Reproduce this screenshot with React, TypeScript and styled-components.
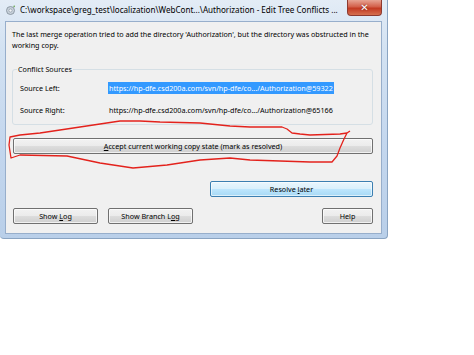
import styled, { createGlobalStyle } from "styled-components";

const GlobalStyle = createGlobalStyle`
  html, body {
    margin: 0;
    padding: 0;
    background: #ffffff;
  }
  body {
    font-family: "Noto Sans", "DejaVu Sans", sans-serif;
    font-size: 7px;
    color: #000;
  }
`;

const Window = styled.div`
  position: relative;

  width: 388px;
  height: 239px;

  display: flex;
  flex-direction: column;

  box-sizing: border-box;
  border: 1px solid #8aa4c2;
  border-top: none;
  border-left: none;
  border-radius: 0 0 4px 4px;

  background: linear-gradient(
    to bottom,
    #e3ecf6 0%,
    #d3e2f2 20%,
    #c4d7ee 60%,
    #b9cfe9 100%
  );
`;

const TitleBar = styled.div`
  height: 21px;

  display: flex;
  align-items: flex-start;
  flex-shrink: 0;
`;

const AppIcon = styled.svg`
  width: 11px;
  height: 11px;

  margin: 5px 4px 0 5px;
`;

const Title = styled.div`
  margin-top: 4px;

  font-size: 8.1px;
  white-space: nowrap;
`;

const CloseButton = styled.div`
  width: 35px;
  height: 16px;

  margin-left: auto;
  margin-right: 5px;

  display: flex;
  align-items: center;
  justify-content: center;

  box-sizing: border-box;
  border: 1px solid #8d3a2f;
  border-top: none;
  border-radius: 0 0 4px 4px;

  background: linear-gradient(to bottom, #e7a493 0%, #d3604a 45%, #c33a22 55%, #d5704f 100%);

  color: #fff;
  font-family: "DejaVu Sans", sans-serif;
  font-size: 10px;
  font-weight: bold;
  text-shadow: 0 0 2px #6b1a10;
`;

const Client = styled.div`
  flex: 1;

  margin: 0 5px 4px 5px;
  padding: 7px 8px 0 6px;

  display: flex;
  flex-direction: column;

  box-sizing: border-box;
  border: 1px solid #97aecb;

  background: #f0f0f0;
`;

const Message = styled.p`
  margin: 0;

  line-height: 11px;
  font-size: 7.2px;
`;

const GroupBox = styled.fieldset`
  margin: 13px 0 0 0;
  padding: 2px 0 3px 7px;

  border: 1px solid #d5dfe5;
  border-radius: 3px;
`;

const GroupLabel = styled.legend`
  margin-left: -3px;
  padding: 0 1px;

  font-size: 7.2px;
  line-height: 11px;
`;

const SourceGrid = styled.div`
  display: grid;
  grid-template-columns: 89px 1fr;
  grid-auto-rows: 22px;
  align-items: center;

  font-size: 7.2px;
`;

const SourceLabel = styled.span``;

const Url = styled.span<{ $selected?: boolean }>`
  justify-self: start;

  margin-left: -1px;
  padding: 1px 1px;

  line-height: 10px;

  background: ${({ $selected }) => ($selected ? "#3399ff" : "transparent")};
  color: ${({ $selected }) => ($selected ? "#ffffff" : "#000000")};
`;

const Button = styled.div<{ $default?: boolean; $width?: number }>`
  height: 16px;
  width: ${({ $width }) => ($width ? `${$width}px` : "auto")};

  display: flex;
  align-items: center;
  justify-content: center;

  box-sizing: border-box;
  border: 1px solid ${({ $default }) => ($default ? "#3c7fb1" : "#707070")};
  border-radius: 2px;

  background: ${({ $default }) =>
    $default
      ? "linear-gradient(to bottom, #eaf6fd 0%, #d9f0fc 50%, #bee6fd 51%, #a7d9f5 100%)"
      : "linear-gradient(to bottom, #f2f2f2 0%, #ebebeb 50%, #dddddd 51%, #cfcfcf 100%)"};
  box-shadow: inset 0 0 0 1px
    ${({ $default }) => ($default ? "rgba(255,255,255,0.6)" : "rgba(255,255,255,0.7)")};

  font-size: 7.2px;
  white-space: nowrap;

  u {
    text-decoration: underline;
    text-underline-offset: 1px;
  }
`;

const AcceptRow = styled.div`
  margin: 13px 0 0 1px;

  display: flex;
  flex-direction: column;
`;

const ResolveRow = styled.div`
  margin-top: 27px;

  display: flex;
  justify-content: flex-end;
`;

const BottomRow = styled.div`
  margin: 11px 0 0 1px;

  display: flex;
  gap: 10px;
`;

const Spacer = styled.div`
  flex: 1;
`;

const Scribble = styled.svg`
  position: absolute;
  left: 0;
  top: 0;

  width: 400px;
  height: 200px;

  pointer-events: none;
  overflow: visible;
`;

export default function App() {
  return (
    <>
      <GlobalStyle />
      <Window>
        <TitleBar>
          <AppIcon viewBox="0 0 11 11">
            <circle cx="5.5" cy="5.5" r="4" fill="#c9d3dc" stroke="#7d8a96" strokeWidth="0.8" />
            <circle cx="5.5" cy="5.5" r="1.6" fill="#f4f6f8" stroke="#7d8a96" strokeWidth="0.6" />
            <path d="M8 1 L10 0.5 L9.5 2.5 Z" fill="#5a9d3a" />
          </AppIcon>
          <Title>
            C:\workspace\greg_test\localization\WebCont...\Authorization - Edit Tree Conflicts ...
          </Title>
          <CloseButton>✕</CloseButton>
        </TitleBar>
        <Client>
          <Message>
            The last merge operation tried to add the directory 'Authorization', but the directory was
            obstructed in the working copy.
          </Message>
          <GroupBox>
            <GroupLabel>Conflict Sources</GroupLabel>
            <SourceGrid>
              <SourceLabel>Source Left:</SourceLabel>
              <Url $selected>https://hp-dfe.csd200a.com/svn/hp-dfe/co.../Authorization@59322</Url>
              <SourceLabel>Source Right:</SourceLabel>
              <Url>https://hp-dfe.csd200a.com/svn/hp-dfe/co.../Authorization@65166</Url>
            </SourceGrid>
          </GroupBox>
          <AcceptRow>
            <Button>
              <span>
                <u>A</u>ccept current working copy state (mark as resolved)
              </span>
            </Button>
          </AcceptRow>
          <ResolveRow>
            <Button $default $width={163}>
              <span>
                Resolve <u>l</u>ater
              </span>
            </Button>
          </ResolveRow>
          <BottomRow>
            <Button $width={85}>
              <span>
                Show <u>L</u>og
              </span>
            </Button>
            <Button $width={85}>
              <span>
                Show Branch L<u>o</u>g
              </span>
            </Button>
            <Spacer />
            <Button $width={51}>Help</Button>
          </BottomRow>
        </Client>
        <Scribble viewBox="0 0 400 200">
          <path
            d="M347 133 L340 134 L310 135 L300 134 L292 133 L287 129 L282 127 L250 127 L230 126 L200 123 L160 122 L140 121 L120 121 L100 124 L80 127 L60 130 L40 133 L20 135 L10 137 L9 145 L11 158 L20 155 L67 156 L100 163 L133 168 L167 165 L200 160 L230 158 L250 160 L280 161 L310 162 L332 162 L337 156 L340 148 L344 139 L347 133 L350 131"
            fill="none"
            stroke="#e3221c"
            strokeWidth="1.3"
            strokeLinejoin="round"
          />
        </Scribble>
      </Window>
    </>
  );
}
